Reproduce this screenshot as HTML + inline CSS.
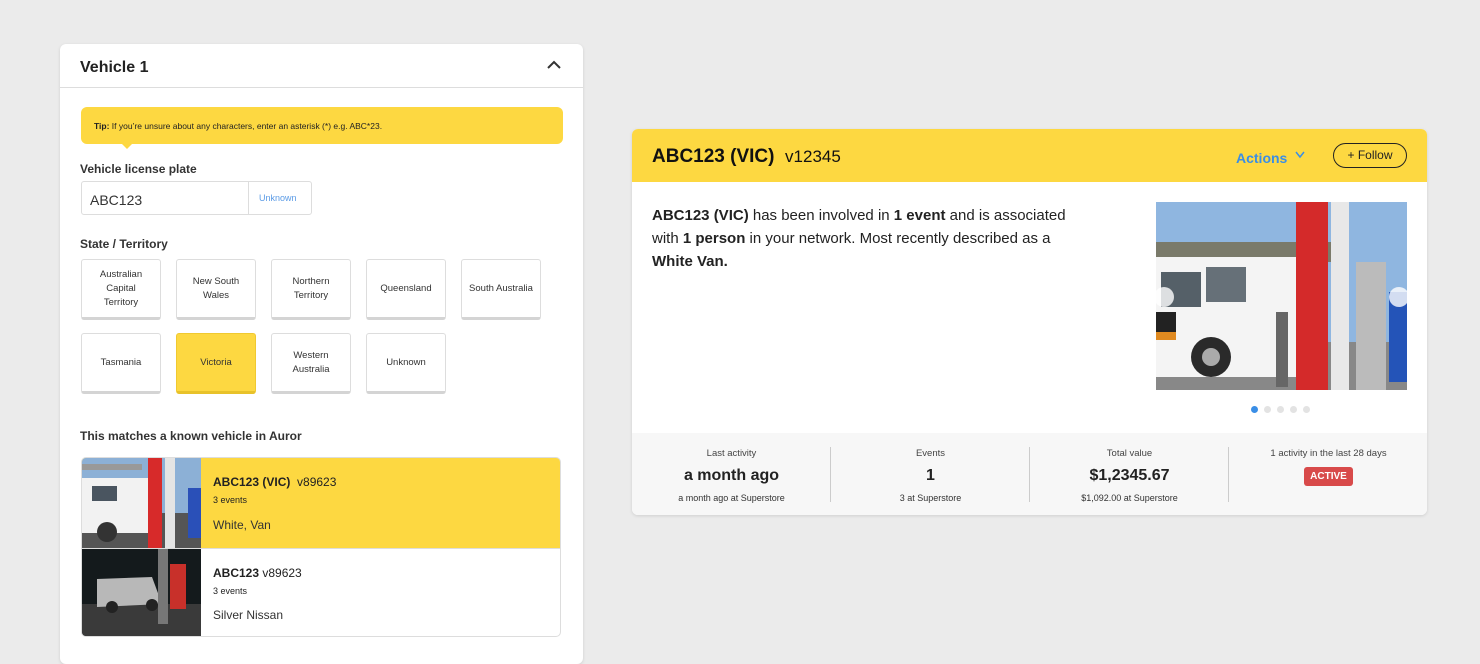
<!DOCTYPE html>
<html><head><style>
*{box-sizing:border-box;margin:0;padding:0}
body{width:1480px;height:643px;background:#ebebeb;font-family:"Liberation Sans",sans-serif;color:#222;position:relative;overflow:hidden}
.abs{position:absolute}
.card{position:absolute;background:#fff;border-radius:6px;box-shadow:0 1px 3px rgba(0,0,0,.12)}
.btn{position:absolute;width:80px;height:61px;border:1px solid #ddd;border-bottom:3px solid #d4d4d4;border-radius:3px;background:#fff;font-size:9.5px;color:#333;display:flex;align-items:center;justify-content:center;text-align:center;line-height:14px}
.btn.sel{background:#fdd841;border-color:#f0c930;border-bottom-color:#e8c22a}
.col{position:absolute;top:0;height:82px;width:199px;text-align:center}
.col .a{font-size:9.5px;color:#444;margin-top:15px}
.col .b{font-size:16px;font-weight:bold;margin-top:8px}
.col .c{font-size:9px;color:#333;margin-top:8px}
</style></head><body>

<div class="card" style="left:60px;top:44px;width:523px;height:620px;">
  <div class="abs" style="left:20px;top:15px;font-size:16px;font-weight:bold;">Vehicle 1</div>
  <svg class="abs" style="left:487px;top:16px" width="14" height="10"><path d="M1 8 L7 2 L13 8" stroke="#333" stroke-width="2" fill="none"/></svg>
  <div class="abs" style="left:0;top:43px;width:523px;height:1px;background:#ddd"></div>
  <div class="abs" style="left:21px;top:63px;width:482px;height:37px;background:#fdd841;border-radius:6px;font-size:8.5px;padding:14px 13px;color:#222"><b>Tip:</b> If you’re unsure about any characters, enter an asterisk (*) e.g. ABC*23.</div>
  <div class="abs" style="left:61px;top:99px;width:0;height:0;border-left:6px solid transparent;border-right:6px solid transparent;border-top:6px solid #fdd841"></div>
  <div class="abs" style="left:20px;top:118px;font-size:12px;font-weight:bold;color:#333">Vehicle license plate</div>
  <div class="abs" style="left:21px;top:137px;width:231px;height:34px;border:1px solid #ddd;border-radius:3px"></div>
  <div class="abs" style="left:188px;top:137px;width:1px;height:34px;background:#ddd"></div>
  <div class="abs" style="left:30px;top:148px;font-size:14px;color:#333">ABC123</div>
  <div class="abs" style="left:199px;top:149px;font-size:9px;color:#5b9be6">Unknown</div>
  <div class="abs" style="left:20px;top:193px;font-size:12px;font-weight:bold;color:#333">State / Territory</div>
  <div class="btn" style="left:21px;top:215px">Australian<br>Capital<br>Territory</div>
  <div class="btn" style="left:116px;top:215px">New South<br>Wales</div>
  <div class="btn" style="left:211px;top:215px">Northern<br>Territory</div>
  <div class="btn" style="left:306px;top:215px">Queensland</div>
  <div class="btn" style="left:401px;top:215px">South Australia</div>
  <div class="btn" style="left:21px;top:289px">Tasmania</div>
  <div class="btn sel" style="left:116px;top:289px">Victoria</div>
  <div class="btn" style="left:211px;top:289px">Western<br>Australia</div>
  <div class="btn" style="left:306px;top:289px">Unknown</div>
  <div class="abs" style="left:20px;top:385px;font-size:12px;font-weight:bold;color:#333">This matches a known vehicle in Auror</div>
  <div class="abs" style="left:21px;top:413px;width:480px;height:180px;border:1px solid #ddd;border-radius:5px;overflow:hidden">
    <div class="abs" style="left:0;top:0;width:480px;height:90px;background:#fdd841"></div>
    <svg class="abs" style="left:0;top:0" width="119" height="90">
      <rect width="119" height="90" fill="#8cb0d6"/><rect y="55" width="119" height="35" fill="#555"/>
      <rect x="0" y="20" width="75" height="55" fill="#f2f2f2"/><rect x="10" y="28" width="25" height="15" fill="#4a5560"/>
      <circle cx="25" cy="74" r="10" fill="#333"/><rect x="66" y="0" width="14" height="90" fill="#d72a2a"/>
      <rect x="83" y="0" width="10" height="90" fill="#e4e4e4"/><rect x="106" y="30" width="13" height="50" fill="#2a50b8"/>
      <rect x="0" y="6" width="60" height="6" fill="#999"/>
    </svg>
    <div class="abs" style="left:131px;top:17px;font-size:12px"><b>ABC123 (VIC)</b>&nbsp; v89623</div>
    <div class="abs" style="left:131px;top:37px;font-size:9px">3 events</div>
    <div class="abs" style="left:131px;top:60px;font-size:12px;color:#333">White, Van</div>
    <div class="abs" style="left:0;top:90px;width:480px;height:1px;background:#ddd"></div>
    <svg class="abs" style="left:0;top:91px" width="119" height="89">
      <rect width="119" height="89" fill="#141a1c"/><rect y="55" width="119" height="34" fill="#3a3a3a"/>
      <path d="M15 30 L70 28 L80 55 L15 58 Z" fill="#b8b8b8"/><circle cx="30" cy="58" r="6" fill="#222"/><circle cx="70" cy="56" r="6" fill="#222"/>
      <rect x="76" y="0" width="10" height="75" fill="#777"/><rect x="88" y="15" width="16" height="45" fill="#c8302a"/>
    </svg>
    <div class="abs" style="left:131px;top:108px;font-size:12px"><b>ABC123</b> v89623</div>
    <div class="abs" style="left:131px;top:128px;font-size:9px">3 events</div>
    <div class="abs" style="left:131px;top:150px;font-size:12px;color:#333">Silver Nissan</div>
    <div class="abs" style="left:0;top:179px;width:480px;height:1px;background:#ddd"></div>
  </div>
</div>

<div class="card" style="left:632px;top:129px;width:795px;height:386px;overflow:hidden">
  <div class="abs" style="left:0;top:0;width:795px;height:53px;background:#fdd841"></div>
  <div class="abs" style="left:20px;top:17px;font-size:19px;color:#111"><b>ABC123 (VIC)</b>&nbsp; <span style="font-size:17px">v12345</span></div>
  <div class="abs" style="left:604px;top:21px;font-size:14px;font-weight:bold;color:#3a8ee6">Actions</div>
  <svg class="abs" style="left:663px;top:22px" width="10" height="8"><path d="M1 1 L5 6 L9 1" stroke="#3a8ee6" stroke-width="1.5" fill="none"/></svg>
  <div class="abs" style="left:701px;top:14px;width:74px;height:25px;border:1px solid #222;border-radius:13px;font-size:12px;text-align:center;line-height:23px">+ Follow</div>
  <div class="abs" style="left:20px;top:75px;width:430px;font-size:15px;line-height:23px;color:#222"><b>ABC123 (VIC)</b> has been involved in <b>1 event</b> and is associated with <b>1 person</b> in your network. Most recently described as a <b>White Van.</b></div>
  <svg class="abs" style="left:524px;top:73px" width="251" height="188">
    <rect width="251" height="188" fill="#8fb6e0"/><rect y="140" width="251" height="48" fill="#888"/>
    <rect x="0" y="40" width="190" height="20" fill="#7a7a6a"/><rect x="0" y="55" width="150" height="120" fill="#f4f4f4"/>
    <rect x="5" y="70" width="40" height="35" fill="#556068"/><rect x="50" y="65" width="40" height="35" fill="#667078"/>
    <rect x="0" y="110" width="20" height="20" fill="#222"/><rect x="0" y="130" width="20" height="8" fill="#e08a20"/>
    <circle cx="55" cy="155" r="20" fill="#2a2a2a"/><circle cx="55" cy="155" r="9" fill="#aaa"/>
    <rect x="140" y="0" width="32" height="188" fill="#d42a2a"/><rect x="175" y="0" width="18" height="188" fill="#e8e8e8"/>
    <rect x="120" y="110" width="12" height="75" fill="#666"/><rect x="200" y="60" width="30" height="128" fill="#bbb"/>
    <rect x="233" y="90" width="18" height="90" fill="#2454b8"/>
    <circle cx="8" cy="95" r="10" fill="rgba(255,255,255,.8)"/><circle cx="243" cy="95" r="10" fill="rgba(255,255,255,.8)"/>
  </svg>
  <div class="abs" style="left:619px;top:277px;width:7px;height:7px;border-radius:50%;background:#3a8ee6"></div>
  <div class="abs" style="left:632px;top:277px;width:7px;height:7px;border-radius:50%;background:#e3e3e3"></div>
  <div class="abs" style="left:645px;top:277px;width:7px;height:7px;border-radius:50%;background:#e3e3e3"></div>
  <div class="abs" style="left:658px;top:277px;width:7px;height:7px;border-radius:50%;background:#e3e3e3"></div>
  <div class="abs" style="left:671px;top:277px;width:7px;height:7px;border-radius:50%;background:#e3e3e3"></div>
  <div class="abs" style="left:0;top:304px;width:795px;height:82px;background:#f7f7f7">
    <div class="col" style="left:0"><div class="a">Last activity</div><div class="b">a month ago</div><div class="c">a month ago at Superstore</div></div>
    <div class="abs" style="left:198px;top:14px;width:1px;height:55px;background:#ccc"></div>
    <div class="col" style="left:199px"><div class="a">Events</div><div class="b">1</div><div class="c">3 at Superstore</div></div>
    <div class="abs" style="left:397px;top:14px;width:1px;height:55px;background:#ccc"></div>
    <div class="col" style="left:398px"><div class="a">Total value</div><div class="b">$1,2345.67</div><div class="c">$1,092.00 at Superstore</div></div>
    <div class="abs" style="left:596px;top:14px;width:1px;height:55px;background:#ccc"></div>
    <div class="col" style="left:597px"><div class="a">1 activity in the last 28 days</div>
      <div style="display:inline-block;margin-top:8px;background:#d84a4a;color:#fff;font-size:10px;font-weight:bold;padding:4px 6px;border-radius:3px">ACTIVE</div></div>
  </div>
</div>
</body></html>
